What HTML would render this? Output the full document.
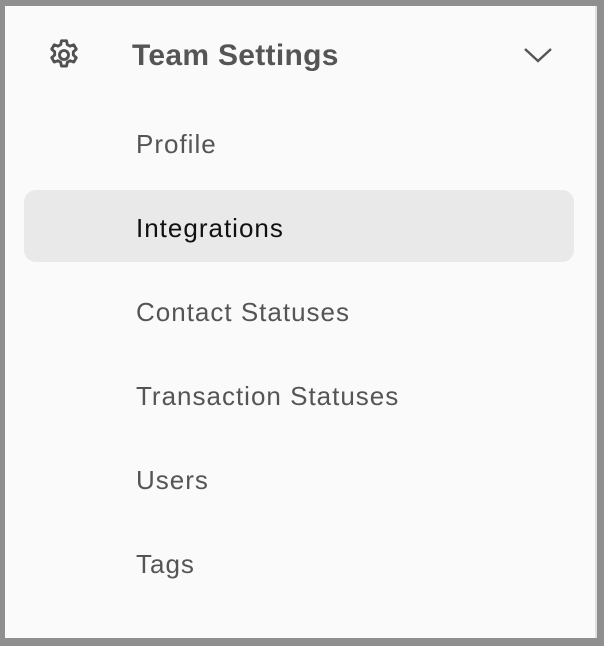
<!DOCTYPE html>
<html><head><style>
html,body{margin:0;padding:0}
body{width:604px;height:646px;background:#8f8f8f;position:relative;overflow:hidden;font-family:"Liberation Sans",sans-serif}
.p{position:absolute;left:5px;top:6px;width:592px;height:632px;background:#fafafa;box-shadow:inset -2px 0 0 #e0e0e0}
.t{position:absolute;left:132px;top:39px;font-size:30px;font-weight:bold;color:#555;letter-spacing:0.3px}
.i{position:absolute;left:136px;font-size:26px;color:#555;line-height:30px;letter-spacing:1px}
.hl{position:absolute;left:24px;top:190px;width:550px;height:72px;background:#e9e9e9;border-radius:12px}
</style></head><body>
<div class="p"></div>
<svg style="position:absolute;left:46px;top:37px" width="36" height="36" viewBox="0 0 24 24" fill="none" stroke="#505050" stroke-width="1.9" stroke-linejoin="round"><path d="M10.3 2.5h3.4l.5 2.6 1.8 1 2.5-.9 1.7 2.9-2 1.8v2.1l2 1.8-1.7 2.9-2.5-.9-1.8 1-.5 2.6h-3.4l-.5-2.6-1.8-1-2.5.9-1.7-2.9 2-1.8V9.9l-2-1.8 1.7-2.9 2.5.9 1.8-1z"/><circle cx="12" cy="12" r="3"/></svg>
<div class="t">Team Settings</div>
<svg style="position:absolute;left:522px;top:45px" width="32" height="20" viewBox="0 0 32 20"><path d="M3 4l13 12L29 4" fill="none" stroke="#555" stroke-width="2.4"/></svg>
<div class="i" style="top:129px">Profile</div>
<div class="hl"></div>
<div class="i" style="top:213px;color:#111">Integrations</div>
<div class="i" style="top:297px">Contact Statuses</div>
<div class="i" style="top:381px">Transaction Statuses</div>
<div class="i" style="top:465px">Users</div>
<div class="i" style="top:549px">Tags</div>
</body></html>
